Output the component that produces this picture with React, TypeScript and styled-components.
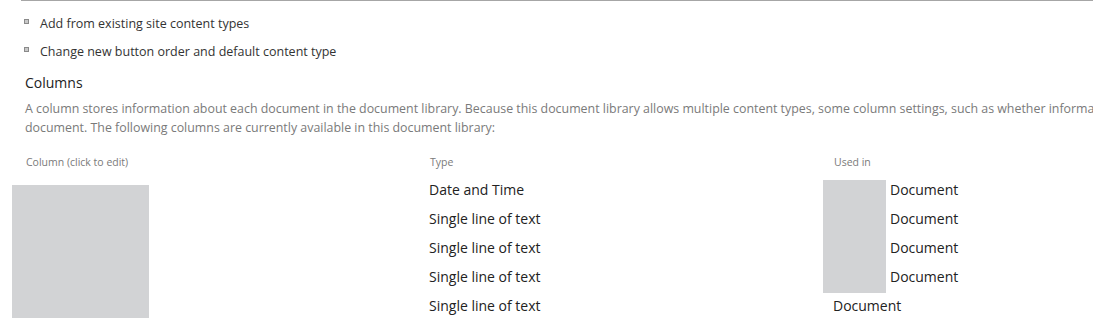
import styled, { createGlobalStyle } from "styled-components";

const GlobalStyle = createGlobalStyle`
  html, body {
    margin: 0;
    padding: 0;
    background: #fff;
    overflow: hidden;
  }
  body {
    font-family: "Open Sans", "Noto Sans", "Liberation Sans", sans-serif;
    color: #333;
  }
`;

interface ColumnRow {
  type: string;
  usedIn: string;
  hiddenUsage: boolean;
}

const rows: ColumnRow[] = [
  { type: "Date and Time", usedIn: "Document", hiddenUsage: true },
  { type: "Single line of text", usedIn: "Document", hiddenUsage: true },
  { type: "Single line of text", usedIn: "Document", hiddenUsage: true },
  { type: "Single line of text", usedIn: "Document", hiddenUsage: true },
  { type: "Single line of text", usedIn: "Document", hiddenUsage: false },
];

export default function App() {
  return (
    <>
      <GlobalStyle />
      <Page>
        <LinkList>
          <LinkItem>
            <Bullet />
            <LinkText>Add from existing site content types</LinkText>
          </LinkItem>
          <LinkItem>
            <Bullet />
            <LinkText>Change new button order and default content type</LinkText>
          </LinkItem>
        </LinkList>

        <Section>
          <Heading>Columns</Heading>
          <Description>
            <Line>
              A column stores information about each document in the document library. Because this
              document library allows multiple content types, some column settings, such as whether
              information is required or optional for a column, are now specified by the content type of the
            </Line>
            <Line>
              document. The following columns are currently available in this document library:
            </Line>
          </Description>

          <TableWrap>
            <HeaderRow>
              <HeaderCell>Column (click to edit)</HeaderCell>
              <HeaderCell>Type</HeaderCell>
              <HeaderCell>Used in</HeaderCell>
            </HeaderRow>
            {rows.map((row, i) => (
              <Row key={i}>
                <Cell />
                <Cell>{row.type}</Cell>
                <UsedCell $indent={row.hiddenUsage}>{row.usedIn}</UsedCell>
              </Row>
            ))}
            <NameRedaction />
            <UsageRedaction />
          </TableWrap>
        </Section>
      </Page>
    </>
  );
}

const Page = styled.div`
  margin-left: 21px;
  border-top: 1px solid #a6a6a6;
  padding-top: 8px;
`;

const LinkList = styled.ul`
  list-style: none;
  margin: 0;
  padding: 0 0 0 3px;
`;

const LinkItem = styled.li`
  display: flex;
  align-items: center;
  height: 28px;
`;

const Bullet = styled.span`
  width: 3px;
  height: 3px;
  border: 1px solid #8a8a8a;
  background: #c8c8c8;
  margin-right: 11px;
  margin-top: -4px;
`;

const LinkText = styled.span`
  font-size: 12.5px;
  color: #333;
`;

const Section = styled.div`
  padding-left: 4px;
  margin-top: 8px;
`;

const Heading = styled.div`
  font-size: 14px;
  color: #222;
  line-height: 20px;
`;

const Description = styled.div`
  margin-top: 6px;
  font-size: 12.4px;
  line-height: 19px;
  color: #7a7a7a;
`;

const Line = styled.div`
  white-space: nowrap;
`;

const TableWrap = styled.div`
  position: relative;
  margin-top: 12px;
`;

const HeaderRow = styled.div`
  display: grid;
  grid-template-columns: 404px 404px 1fr;
  height: 26px;
  align-items: center;
`;

const HeaderCell = styled.div`
  font-size: 10.5px;
  color: #7a7a7a;
  padding-left: 1px;
`;

const Row = styled.div`
  display: grid;
  grid-template-columns: 404px 404px 1fr;
  height: 29px;
  align-items: center;
`;

const Cell = styled.div`
  font-size: 14px;
  color: #222;
`;

const UsedCell = styled(Cell)<{ $indent: boolean }>`
  padding-left: ${({ $indent }) => ($indent ? "57px" : "0")};
`;

const NameRedaction = styled.div`
  position: absolute;
  left: -13px;
  top: 36px;
  width: 137px;
  height: 140px;
  background: #d2d3d5;
`;

const UsageRedaction = styled.div`
  position: absolute;
  left: 798px;
  top: 31px;
  width: 63px;
  height: 113px;
  background: #d2d3d5;
`;
